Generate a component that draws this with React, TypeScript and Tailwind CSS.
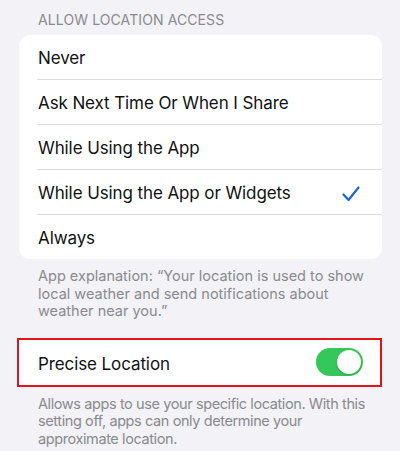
import React from "react";

const font = { fontFamily: "Inter, 'Noto Sans', sans-serif" };

export default function App() {
  const rows = [
    "Never",
    "Ask Next Time Or When I Share",
    "While Using the App",
    "While Using the App or Widgets",
    "Always",
  ];
  return (
    <div className="w-[400px] h-[451px] bg-[#f2f2f7] overflow-hidden" style={font}>
      <div className="pt-[11px] mb-[6px] pl-[38px] text-[14px] leading-[18px] text-[#8a8a8e] tracking-[0.1px]">
        ALLOW LOCATION ACCESS
      </div>
      <div className="ml-[19px] w-[363px] bg-white rounded-[11px] pl-[18px]">
        {rows.map((r, i) => (
          <div
            key={r}
            className={
              "flex items-center justify-between pr-[22px] " +
              (i < rows.length - 1 ? "h-[45px] border-b border-[#dcdce0]" : "h-[44px]")
            }
          >
            <span className="mt-[3px] pl-[1px] text-[17px] text-[#111] tracking-[-0.1px]">{r}</span>
            {i === 3 && (
              <svg width="18" height="16" viewBox="0 0 18 16" className="mt-[4px]">
                <path
                  d="M1.5 8.5 L6.5 14 L16.5 1.5"
                  fill="none"
                  stroke="#1f63e0"
                  strokeWidth="2.2"
                  strokeLinecap="round"
                  strokeLinejoin="round"
                />
              </svg>
            )}
          </div>
        ))}
      </div>
      <div className="pt-[8px] pl-[38px] pr-[4px] text-[14.5px] leading-[17.5px] text-[#8a8a8e] whitespace-nowrap">
        App explanation: “Your location is used to show
        <br />
        local weather and send notifications about
        <br />
        weather near you.”
      </div>
      <div className="mt-[18px] ml-[17px] w-[365px] h-[49px] bg-white border-2 border-[#e1141c] flex items-center justify-between pl-[19px] pr-[17px]">
        <span className="mt-[5px] text-[17px] text-[#111] tracking-[-0.1px]">Precise Location</span>
        <div className="w-[47px] h-[28px] rounded-full bg-[#34c759] relative">
          <div className="absolute right-[2px] top-[2px] w-[24px] h-[24px] rounded-full bg-white shadow-[0_1px_2px_rgba(0,0,0,0.2)]" />
        </div>
      </div>
      <div className="pt-[8px] pl-[38px] pr-[4px] text-[14.5px] leading-[17.5px] text-[#8a8a8e] whitespace-nowrap tracking-[-0.4px]">
        Allows apps to use your specific location. With this
        <br />
        setting off, apps can only determine your
        <br />
        approximate location.
      </div>
    </div>
  );
}
